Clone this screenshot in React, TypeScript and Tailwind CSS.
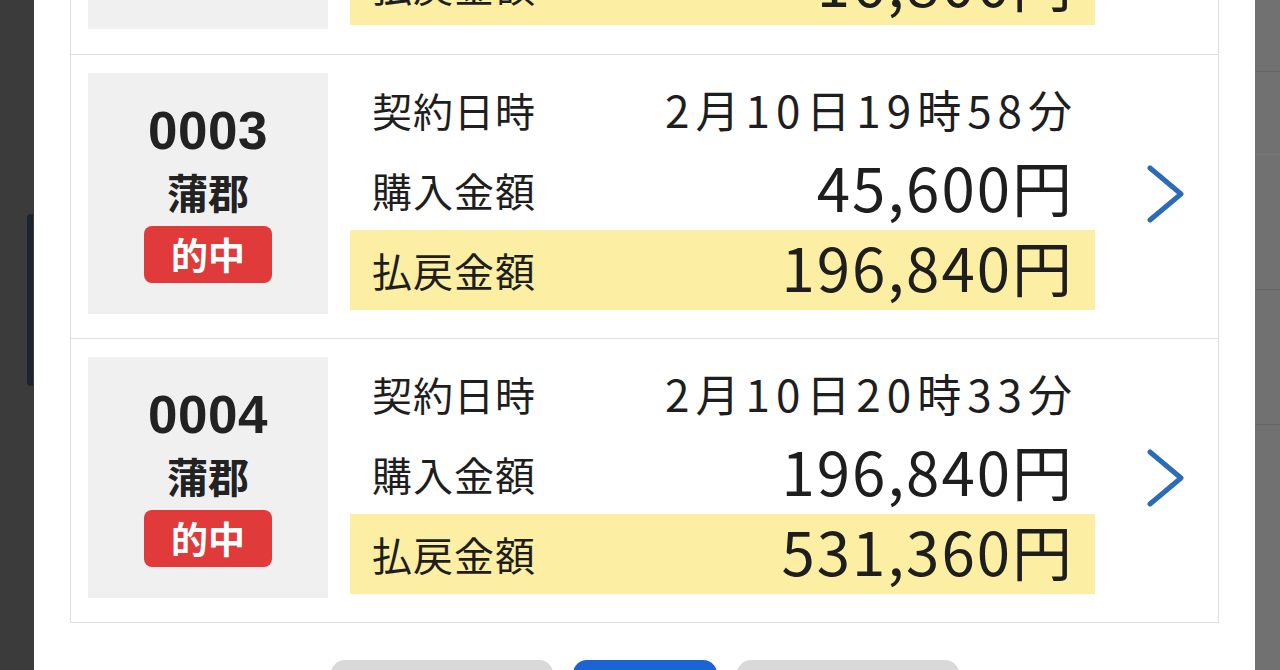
type Ticket = {
  no: string;
  place: string;
  date: string;
  buy: string;
  pay: string;
};

const tickets: Ticket[] = [
  { no: '0002', place: '蒲郡', date: '2月10日19時31分', buy: '5,400円', pay: '16,800円' },
  { no: '0003', place: '蒲郡', date: '2月10日19時58分', buy: '45,600円', pay: '196,840円' },
  { no: '0004', place: '蒲郡', date: '2月10日20時33分', buy: '196,840円', pay: '531,360円' },
];

const jp = { fontFamily: '"Noto Sans CJK JP", "Noto Sans", sans-serif' };

const Chevron = () => (
  <svg width="40" height="58" viewBox="0 0 40 58" fill="none">
    <polyline points="4,3 35,29 4,55" stroke="#2b6cb8" strokeWidth="5" strokeLinecap="round" strokeLinejoin="round" />
  </svg>
);

const TicketRow = ({ t }: { t: Ticket }) => (
  <div className="flex items-stretch border-t border-[#dedede] first:border-t-0 pt-[18px] pb-[24px] pl-[17px] pr-[32px] h-[284px]">
    {/* 左：番号・場名・的中 */}
    <div className="w-[240px] h-[241px] bg-[#f0f0f0] flex flex-col items-center justify-center shrink-0">
      <div className="text-[53px] font-bold leading-none text-[#222] tracking-[0.5px]" style={{ fontFamily: '"Liberation Sans", Arial, sans-serif' }}>
        {t.no}
      </div>
      <div className="text-[41px] font-bold leading-none text-[#222] mt-[14px]" style={jp}>
        {t.place}
      </div>
      <div className="mt-[14px] w-[128px] h-[57px] rounded-[8px] bg-[#e13a3a] flex items-center justify-center text-white text-[37px] font-bold leading-none" style={jp}>
        的中
      </div>
    </div>

    {/* 中：契約情報 */}
    <div className="ml-[22px] w-[745px] flex flex-col text-[#1e1e1e]" style={jp}>
      <div className="h-[78px] flex items-center justify-between pl-[22px] pr-[23px]">
        <span className="text-[40px] leading-none tracking-[1px] mb-[4px]">契約日時</span>
        <span className="text-[44px] leading-none tracking-[6px] mr-[-6px] mb-[6px]">{t.date}</span>
      </div>
      <div className="h-[79px] flex items-center justify-between pl-[22px] pr-[23px]">
        <span className="text-[40px] leading-none tracking-[1px] mb-[2px]">購入金額</span>
        <span className="text-[60px] leading-none tracking-[2px] mr-[-2px] mb-[10px]">{t.buy}</span>
      </div>
      <div className="h-[80px] flex items-center justify-between pl-[22px] pr-[23px] bg-[#fcefa3]">
        <span className="text-[40px] leading-none tracking-[1px]">払戻金額</span>
        <span className="text-[60px] leading-none tracking-[2px] mr-[-2px] mb-[8px]">{t.pay}</span>
      </div>
    </div>

    {/* 右：矢印 */}
    <div className="flex-1 flex items-center justify-end">
      <Chevron />
    </div>
  </div>
);

export default function App() {
  return (
    <div className="w-[1280px] h-[670px] flex overflow-hidden bg-white">
      <div className="w-[34px] shrink-0 bg-[#3b3b3b] flex flex-col">
        <div className="h-[214px]" />
        <div className="ml-[27px] w-[6px] h-[172px] bg-[#1c2430] rounded-l-[4px]" />
      </div>

      <div className="flex-1 bg-white flex flex-col overflow-hidden">
        <div className="mx-[36px] -mt-[231px] border border-[#dedede] bg-white">
          {tickets.map((t) => (
            <TicketRow key={t.no} t={t} />
          ))}
        </div>

        <div className="flex justify-center gap-[20px] mt-[37px]">
          <div className="w-[222px] h-[40px] rounded-t-[14px] bg-[#d9d9d9]" />
          <div className="w-[144px] h-[40px] rounded-t-[14px] bg-[#1a65d3]" />
          <div className="w-[222px] h-[40px] rounded-t-[14px] bg-[#d9d9d9]" />
        </div>
      </div>

      <div className="w-[25px] shrink-0 bg-[#717171] flex flex-col">
        <div className="h-[72px] border-b border-[#666]" />
        <div className="h-[83px] border-b border-[#777]" />
        <div className="h-[135px] border-b border-[#666]" />
        <div className="h-[135px] border-b border-[#666]" />
      </div>
    </div>
  );
}
